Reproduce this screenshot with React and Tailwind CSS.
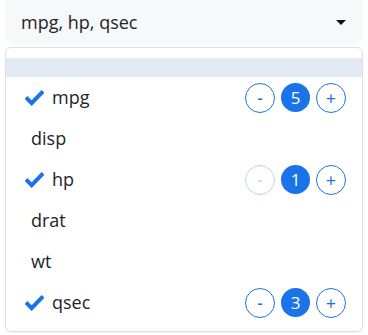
const options = [
  { name: 'mpg', checked: true, count: 5 },
  { name: 'disp' },
  { name: 'hp', checked: true, count: 1, minDisabled: true },
  { name: 'drat' },
  { name: 'wt' },
  { name: 'qsec', checked: true, count: 3 },
];

const CheckMark = () => (
  <svg viewBox="0 0 20 17" className="w-[19px] h-[17px]">
    <path d="M1 8.5 L7 14.5 L19 2" fill="none" stroke="#1a73e8" strokeWidth="4.2" strokeLinejoin="miter" />
  </svg>
);

const Stepper = ({ count, minDisabled }) => (
  <div className="flex items-center gap-[6px]">
    <button className={`w-[30px] h-[30px] rounded-full border flex items-center justify-center text-[16px] font-semibold leading-none ${minDisabled ? 'border-[#b9d3f6] text-[#c4d6ee]' : 'border-[#1a73e8] text-[#1a73e8]'}`}>-</button>
    <span className="w-[29px] h-[29px] rounded-full bg-[#1a73e8] text-white flex items-center justify-center text-[17px]">{count}</span>
    <button className="w-[30px] h-[30px] rounded-full border border-[#1a73e8] text-[#1a73e8] flex items-center justify-center text-[18px] leading-none">+</button>
  </div>
);

export default function App() {
  return (
    <div className="w-[368px] h-[335px] bg-white text-[#212529] font-['Open_Sans',sans-serif]">
      <div className="mx-[5px] h-[44px] bg-[#f6f8fa] rounded-b-md flex items-center justify-between pl-4 pr-[17px]">
        <span className="text-[18px]">mpg, hp, qsec</span>
        <span className="w-0 h-0 border-l-[5px] border-r-[5px] border-t-[5px] border-l-transparent border-r-transparent border-t-[#111]" />
      </div>
      <div className="mx-[5px] mt-[3px] h-[285px] border border-[#dcdee1] rounded-md pt-[10px] shadow-[0_1px_2px_rgba(0,0,0,0.05)]">
        <div className="h-[19px] bg-[#e1eaf3]" />
        {options.map((o) => (
          <div key={o.name} className="h-[41px] flex items-center justify-between pr-[16px]">
            {o.checked ? (
              <div className="flex items-center pl-[19px] gap-[8px]">
                <CheckMark />
                <span className="text-[18px]">{o.name}</span>
              </div>
            ) : (
              <span className="pl-[25px] text-[18px]">{o.name}</span>
            )}
            {o.checked && <Stepper count={o.count} minDisabled={o.minDisabled} />}
          </div>
        ))}
      </div>
    </div>
  );
}
